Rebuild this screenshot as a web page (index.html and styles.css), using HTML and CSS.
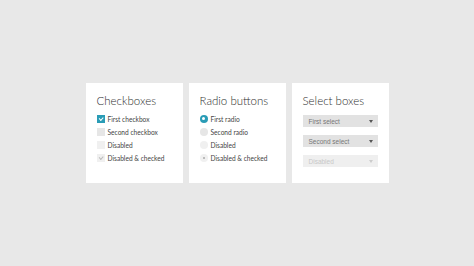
FILE: index.html
```html
<!DOCTYPE html>
<html lang="en">
<head>
    <meta charset="UTF-8">
    <meta name="viewport" content="width=device-width, initial-scale=1.0">
    <title>Form controls</title>
    <link rel="stylesheet" href="styles.css">
</head>
<body>
    <div class="cards">
        <div class="card">
            <h2>Checkboxes</h2>
            <ul class="options">
                <li><span class="box checked"></span> First checkbox</li>
                <li><span class="box"></span> Second checkbox</li>
                <li><span class="box disabled"></span> Disabled</li>
                <li><span class="box disabled checked"></span> Disabled &amp; checked</li>
            </ul>
        </div>
        <div class="card">
            <h2>Radio buttons</h2>
            <ul class="options">
                <li><span class="radio checked"></span> First radio</li>
                <li><span class="radio"></span> Second radio</li>
                <li><span class="radio disabled"></span> Disabled</li>
                <li><span class="radio disabled checked"></span> Disabled &amp; checked</li>
            </ul>
        </div>
        <div class="card">
            <h2>Select boxes</h2>
            <div class="selects">
                <div class="select">First select</div>
                <div class="select">Second select</div>
                <div class="select disabled">Disabled</div>
            </div>
        </div>
    </div>
</body>
</html>
```

FILE: styles.css
```css
body {
    font-family: Lato, "Open Sans", sans-serif;
    background-color: #e8e8e8;
    margin: 0;
    height: 266px;
    display: flex;
    align-items: center;
    justify-content: center;
}
.cards {
    display: flex;
    gap: 6px;
}
.card {
    width: 97px;
    height: 100px;
    box-sizing: border-box;
    background-color: white;
    padding: 10px 11px;
}
h2 {
    margin: 0 0 3px;
    font-size: 11.5px;
    line-height: 16px;
    font-weight: 300;
    color: #2e2e2e;
}
.options {
    list-style: none;
    margin: 0;
    padding: 0;
}
.options li {
    height: 13px;
    display: flex;
    align-items: center;
    gap: 3px;
    font-size: 6.6px;
    color: #444;
}
.box,
.radio {
    width: 8px;
    height: 8px;
    flex-shrink: 0;
    background-color: #e6e6e6;
    position: relative;
}
.box.disabled,
.radio.disabled {
    background-color: #f0f0f0;
}
.radio {
    border-radius: 50%;
}
.box.checked {
    background-color: #2a9cb6;
}
.box.checked::after {
    content: "";
    position: absolute;
    left: 2px;
    top: 2px;
    width: 3px;
    height: 1.5px;
    border-left: 1px solid white;
    border-bottom: 1px solid white;
    transform: rotate(-45deg);
}
.box.disabled.checked {
    background-color: #f0f0f0;
}
.box.disabled.checked::after {
    border-color: #bbb;
}
.radio.checked {
    background-color: #2a9cb6;
}
.radio.checked::after {
    content: "";
    position: absolute;
    left: 2.5px;
    top: 2.5px;
    width: 3px;
    height: 3px;
    border-radius: 50%;
    background-color: white;
}
.radio.disabled.checked {
    background-color: #f0f0f0;
}
.radio.disabled.checked::after {
    left: 3px;
    top: 3px;
    width: 2px;
    height: 2px;
    background-color: #aaa;
}
.selects {
    display: flex;
    flex-direction: column;
    gap: 8px;
    margin-top: 6px;
}
.select {
    height: 12px;
    background-color: #e2e2e2;
    font-family: "Liberation Sans", Arial, sans-serif;
    font-size: 6.5px;
    color: #777;
    display: flex;
    align-items: center;
    padding: 0 6px;
    position: relative;
}
.select::after {
    content: "";
    position: absolute;
    right: 5px;
    top: 5px;
    border-left: 2px solid transparent;
    border-right: 2px solid transparent;
    border-top: 3px solid #555;
}
.select.disabled {
    background-color: #efefef;
    color: #c8c8c8;
}
.select.disabled::after {
    border-top-color: #ccc;
}
```
